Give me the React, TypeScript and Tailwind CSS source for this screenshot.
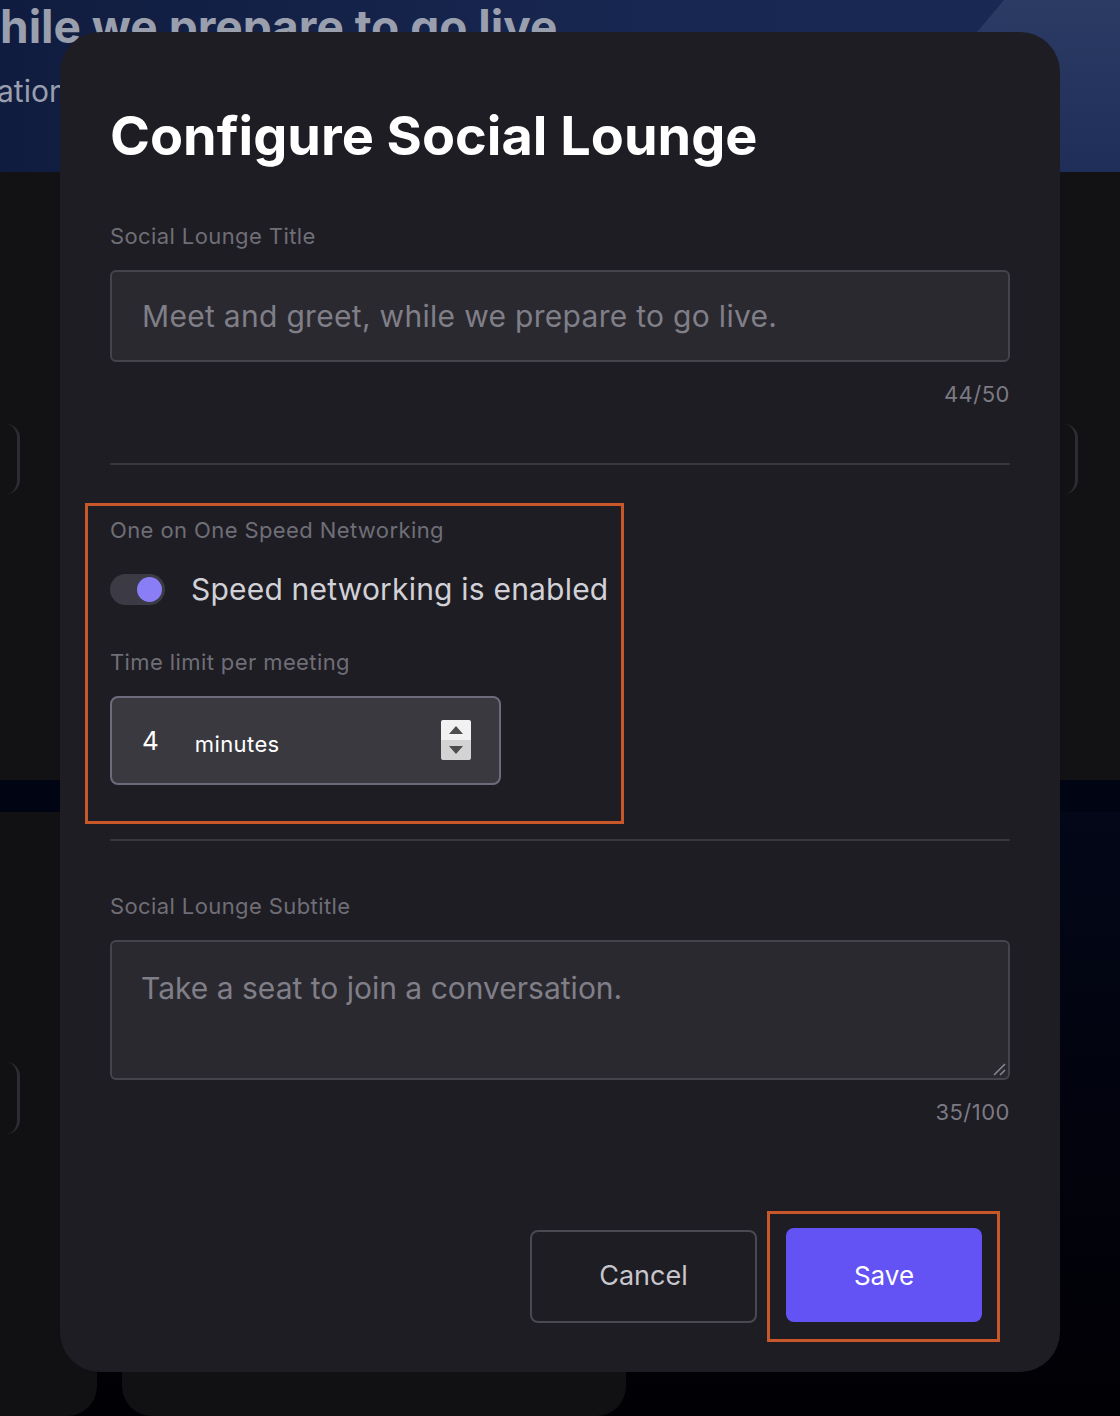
import React from 'react';

const font = { fontFamily: 'Inter, "Noto Sans", sans-serif' };

function Label({ children }: { children: React.ReactNode }) {
  return <div className="text-[22px] leading-[26px] tracking-[0.4px] text-[#6f6e77]">{children}</div>;
}

function Counter({ children }: { children: React.ReactNode }) {
  return <div className="text-right text-[22px] leading-[26px] tracking-[0.5px] text-[#7b7a83]">{children}</div>;
}

function Spinner() {
  return (
    <div className="flex h-[40px] w-[30px] flex-col overflow-hidden rounded-[2px]">
      <div className="flex h-1/2 items-center justify-center bg-[#f1f1f1]">
        <svg width="14" height="8" viewBox="0 0 14 8">
          <path d="M7 0 L14 8 L0 8 Z" fill="#4d4d4d" />
        </svg>
      </div>
      <div className="flex h-1/2 items-center justify-center bg-[#d3d3d3]">
        <svg width="14" height="8" viewBox="0 0 14 8">
          <path d="M0 0 L14 0 L7 8 Z" fill="#4d4d4d" />
        </svg>
      </div>
    </div>
  );
}

function Backdrop() {
  return (
    <div className="flex h-full flex-col">
      <div className="relative h-[172px] overflow-hidden bg-gradient-to-r from-[#101c3f] via-[#17264f] to-[#1a2954]">
        <div className="absolute left-[1004px] top-0 h-[200px] w-[300px] origin-top-left -skew-x-[40deg] bg-gradient-to-b from-[#2b3b64] to-[#1d2c56]" />
        <div className="relative mt-[-2px] whitespace-nowrap text-[46px] font-bold leading-[56px] text-[#9a9fae]">
          hile we prepare to go live
        </div>
        <div className="relative ml-[-3px] mt-[18px] whitespace-nowrap text-[30px] leading-[38px] text-[#9a9fae]">
          ation
        </div>
      </div>
      <div className="flex h-[608px] items-start justify-between bg-[#121215]">
        <div className="ml-[-40px] mt-[252px] h-[70px] w-[60px] rounded-r-[14px] border-r-[3px] border-[#2c2c33]" />
        <div className="mr-[42px] mt-[252px] h-[70px] w-[20px] rounded-r-[14px] border-r-[3px] border-[#2c2c33]" />
      </div>
      <div className="h-[32px] bg-[#010412]" />
      <div className="flex flex-1 bg-gradient-to-b from-[#030718] to-[#010105]">
        <div className="flex w-[97px] items-start rounded-br-[30px] bg-[#111113]">
          <div className="ml-[-40px] mt-[250px] h-[72px] w-[60px] rounded-r-[14px] border-r-[3px] border-[#2c2c33]" />
        </div>
        <div className="ml-[25px] w-[504px] rounded-b-[30px] bg-[#111113]" />
      </div>
    </div>
  );
}

export default function App() {
  return (
    <div className="relative h-[1416px] w-[1120px] overflow-hidden bg-black" style={font}>
      <Backdrop />

      <div className="absolute left-[60px] top-[32px] flex h-[1340px] w-[1000px] flex-col rounded-[40px] bg-[#1e1d23] px-[50px] pt-[72px]">
        <h1 className="text-[54px] font-bold leading-[64px] text-white">Configure Social Lounge</h1>

        <div className="mt-[55px]">
          <Label>Social Lounge Title</Label>
        </div>
        <div className="mt-[21px] flex h-[92px] items-center rounded-[6px] border-2 border-[#45444c] bg-[#2a2930] pl-[30px] text-[30px] tracking-[0.3px] text-[#807f88]">
          Meet and greet, while we prepare to go live.
        </div>
        <div className="mt-[19px]">
          <Counter>44/50</Counter>
        </div>
        <div className="mt-[56px] h-[2px] bg-[#38373e]" />

        <div className="ml-[-25px] mt-[38px] w-[539px] border-[3px] border-[#c8572a] pb-[36px] pl-[22px] pt-[11px]">
          <Label>One on One Speed Networking</Label>
          <div className="mt-[29px] flex h-[34px] items-center gap-[26px]">
            <div className="flex h-[31px] w-[55px] items-center justify-end rounded-full bg-[#3b3a45] pr-[3px]">
              <div className="h-[25px] w-[25px] rounded-full bg-[#8a7ef6]" />
            </div>
            <span className="text-[30px] leading-[34px] tracking-[0.2px] text-[#d2d1d8]">Speed networking is enabled</span>
          </div>
          <div className="mt-[43px]">
            <Label>Time limit per meeting</Label>
          </div>
          <div className="mt-[21px] flex h-[89px] w-[391px] items-center rounded-[8px] border-2 border-[#6d6a7e] bg-[#3a3940] pl-[30px] pr-[28px]">
            <span className="text-[26px] text-white">4</span>
            <span className="ml-[36px] mt-[8px] text-[22px] tracking-[0.4px] text-white">minutes</span>
            <div className="ml-auto mt-[-2px]">
              <Spinner />
            </div>
          </div>
        </div>

        <div className="mt-[15px] h-[2px] bg-[#38373e]" />
        <div className="mt-[52px]">
          <Label>Social Lounge Subtitle</Label>
        </div>
        <div className="relative mt-[21px] h-[140px] rounded-[6px] border-2 border-[#45444c] bg-[#2a2930] pl-[29px] pt-[26px] text-[30px] leading-[40px] text-[#807f88]">
          Take a seat to join a conversation.
          <svg className="absolute bottom-[2px] right-[2px]" width="14" height="14" viewBox="0 0 14 14">
            <path d="M2 13 L13 2 M8 13 L13 8" stroke="#8a8992" strokeWidth="1.5" />
          </svg>
        </div>
        <div className="mt-[19px]">
          <Counter>35/100</Counter>
        </div>

        <div className="mr-[10px] mt-[86px] flex items-center justify-end gap-[10px]">
          <button className="flex h-[93px] w-[227px] items-center justify-center rounded-[8px] border-2 border-[#4a4952] text-[27px] text-[#c7c6cd]">
            Cancel
          </button>
          <div className="border-[3px] border-[#c8572a] pb-[17px] pl-[16px] pr-[15px] pt-[14px]">
            <button className="flex h-[94px] w-[196px] items-center justify-center rounded-[8px] bg-[#6353f5] text-[26px] text-white">
              Save
            </button>
          </div>
        </div>
      </div>
    </div>
  );
}
